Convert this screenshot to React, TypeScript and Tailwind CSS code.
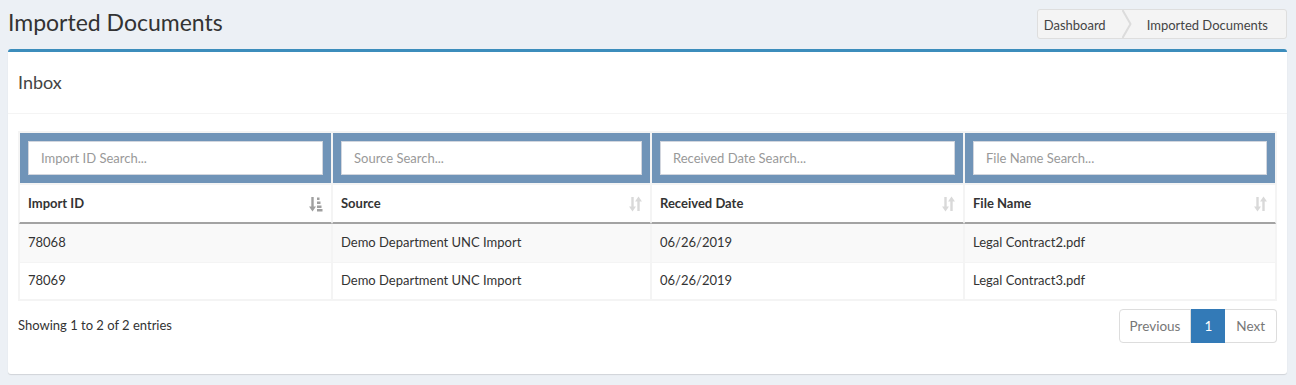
import React from "react";

const font = { fontFamily: "Lato, 'Open Sans', sans-serif" };

function SortBoth() {
  return (
    <svg width="13" height="16" viewBox="0 0 13 16" className="text-[#d9d9d9]">
      <path d="M3.5 1v11" stroke="currentColor" strokeWidth="2.4" />
      <path d="M0 10.5h7l-3.5 5z" fill="currentColor" />
      <path d="M9.5 15V4" stroke="currentColor" strokeWidth="2.4" />
      <path d="M6 5.5h7L9.5 0.5z" fill="currentColor" />
    </svg>
  );
}

function SortAsc() {
  return (
    <svg width="14" height="16" viewBox="0 0 14 16" className="text-[#a0a0a0]">
      <path d="M3.5 1v11" stroke="currentColor" strokeWidth="2.4" />
      <path d="M0 10.5h7l-3.5 5z" fill="currentColor" />
      <rect x="8" y="1.5" width="2.5" height="2.5" fill="currentColor" />
      <rect x="8" y="5.5" width="3.5" height="2.5" fill="currentColor" />
      <rect x="8" y="9.5" width="4.5" height="2.5" fill="currentColor" />
      <rect x="8" y="13" width="5.5" height="2.5" fill="currentColor" />
    </svg>
  );
}

const cols = [
  { label: "Import ID", search: "Import ID Search...", asc: true },
  { label: "Source", search: "Source Search...", asc: false },
  { label: "Received Date", search: "Received Date Search...", asc: false },
  { label: "File Name", search: "File Name Search...", asc: false },
];

const rows = [
  ["78068", "Demo Department UNC Import", "06/26/2019", "Legal Contract2.pdf"],
  ["78069", "Demo Department UNC Import", "06/26/2019", "Legal Contract3.pdf"],
];

export default function App() {
  return (
    <div className="min-h-[385px] w-[1296px] bg-[#ecf0f5] pl-2 pr-[9px] pt-[9px] pb-[9px]" style={font}>
      <div className="flex items-start justify-between h-[40px]">
        <h1 className="text-[23px] leading-[28px] text-[#333] font-normal mt-[-1px]">Imported Documents</h1>
        <div className="flex items-stretch h-[30px] bg-[#f4f4f4] border border-[#dedede] rounded-[3px] text-[13px] text-[#444]">
          <div className="flex items-center pt-[3px] pl-[6px] pr-[16px]">Dashboard</div>
          <svg width="10" height="28" viewBox="0 0 10 28" className="block">
            <polyline points="0.5,0 8.5,14 0.5,28" fill="none" stroke="#dcdcdc" strokeWidth="2" />
          </svg>
          <div className="flex items-center pt-[3px] pl-[15px] pr-[18px]">Imported Documents</div>
        </div>
      </div>

      <div className="bg-white border-t-[3px] border-[#3c8dbc] rounded-[3px] shadow-[0_1px_1px_rgba(0,0,0,0.12)]">
        <div className="h-[62px] flex items-center px-[10px] pb-[2px] border-b border-[#f4f4f4]">
          <h3 className="text-[18px] leading-[20px] text-[#444] font-normal">Inbox</h3>
        </div>
        <div className="px-[10px] pt-[17px] pb-[31px]">
          <table className="w-[1259px] table-fixed border-separate border-spacing-0 border border-[#f4f4f4] text-[13px] text-[#333]">
            <colgroup>
              <col className="w-[313px]" />
              <col className="w-[319px]" />
              <col className="w-[313px]" />
              <col className="w-[312px]" />
            </colgroup>
            <thead>
              <tr>
                {cols.map((c) => (
                  <th key={c.label} className="bg-[#7094b8] border border-[#f4f4f4] p-[8px] font-normal">
                    <input
                      readOnly
                      placeholder={c.search}
                      className="block w-full h-[34px] bg-white border border-[#d2d6de] px-[12px] text-[13px] text-[#555] placeholder:text-[#999] outline-none"
                      style={font}
                    />
                  </th>
                ))}
              </tr>
              <tr>
                {cols.map((c) => (
                  <th
                    key={c.label}
                    className="h-[40px] border-x border-t border-[#f4f4f4] border-b-2 border-b-[#a3a3a3] px-[8px] text-left font-bold text-[#333]"
                  >
                    <div className="flex items-center justify-between">
                      <span>{c.label}</span>
                      {c.asc ? <SortAsc /> : <SortBoth />}
                    </div>
                  </th>
                ))}
              </tr>
            </thead>
            <tbody>
              {rows.map((r, i) => (
                <tr key={i} className={i === 0 ? "bg-[#f9f9f9]" : "bg-white"}>
                  {r.map((v, j) => (
                    <td key={j} className={`${i === 0 ? "h-[39px]" : "h-[37px]"} border-x border-b border-[#f4f4f4] px-[8px]`}>
                      {v}
                    </td>
                  ))}
                </tr>
              ))}
            </tbody>
          </table>
          <div className="flex items-center justify-between mt-[8px]">
            <div className="text-[13px] text-[#333]">Showing 1 to 2 of 2 entries</div>
            <div className="flex h-[34px] text-[13.5px]">
              <div className="flex items-center px-[10px] border border-[#ddd] rounded-l-[4px] text-[#777] bg-white">Previous</div>
              <div className="flex items-center px-[12px] bg-[#337ab7] border border-[#337ab7] text-white">1</div>
              <div className="flex items-center px-[11px] border border-[#ddd] border-l-0 rounded-r-[4px] text-[#777] bg-white">Next</div>
            </div>
          </div>
        </div>
      </div>
    </div>
  );
}
